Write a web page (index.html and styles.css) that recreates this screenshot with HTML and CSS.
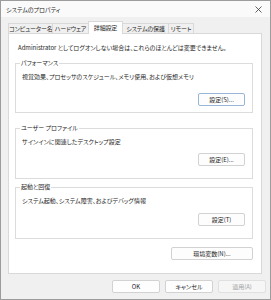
FILE: index.html
```html
<!DOCTYPE html>
<html lang="ja">
<head>
<meta charset="utf-8">
<title>システムのプロパティ</title>
<link rel="stylesheet" href="styles.css">
</head>
<body>
<div class="window">
  <div class="titlebar">
    <span class="title">システムのプロパティ</span>
    <svg class="close" width="7" height="7" viewBox="0 0 7 7"><path d="M0.5 0.5 L6.5 6.5 M6.5 0.5 L0.5 6.5" stroke="#3a3a3a" stroke-width="0.8" fill="none"/></svg>
  </div>
  <div class="tabs">
    <div class="tab t1">コンピューター名</div>
    <div class="tab t2">ハードウェア</div>
    <div class="tab t3 active">詳細設定</div>
    <div class="tab t4">システムの保護</div>
    <div class="tab t5">リモート</div>
  </div>
  <div class="panel">
    <div class="notice">Administrator としてログオンしない場合は、これらのほとんどは変更できません。</div>
    <div class="group g1">
      <div class="label">パフォーマンス</div>
      <div class="desc">視覚効果、プロセッサのスケジュール、メモリ使用、および仮想メモリ</div>
      <button class="btn focus">設定(S)...</button>
    </div>
    <div class="group g2">
      <div class="label">ユーザー プロファイル</div>
      <div class="desc">サインインに関連したデスクトップ設定</div>
      <button class="btn">設定(E)...</button>
    </div>
    <div class="group g3">
      <div class="label">起動と回復</div>
      <div class="desc">システム起動、システム障害、およびデバッグ情報</div>
      <button class="btn">設定(T)</button>
    </div>
    <button class="btn env">環境変数(N)...</button>
  </div>
  <div class="actions">
    <button class="btn act">OK</button>
    <button class="btn act">キャンセル</button>
    <button class="btn act disabled">適用(A)</button>
  </div>
</div>
</body>
</html>
```
FILE: styles.css
```css
* { box-sizing: border-box; }
html, body { margin: 0; padding: 0; }
body {
  width: 271px;
  height: 300px;
  font-family: "Noto Sans CJK JP", "Noto Sans", sans-serif;
  font-size: 6px;
  color: #262626;
  font-feature-settings: "palt";
  background: #f0f0f0;
}
.window {
  width: 271px;
  height: 300px;
  border: 1px solid #9c9c9c;
  background: #f0f0f0;
  display: flex;
  flex-direction: column;
}
.titlebar {
  height: 16px;
  background: #fafafa;
  display: flex;
  align-items: center;
  justify-content: space-between;
  padding: 0 8px 0 5px;
  flex: none;
}
.title { line-height: 9px; color: #2a2a2a; }
.close { display: block; }
.tabs {
  display: flex;
  align-items: flex-end;
  height: 12px;
  margin: 4px 0 0 7px;
  flex: none;
  position: relative;
  z-index: 1;
}
.tab {
  height: 10px;
  line-height: 9px;
  text-align: center;
  border: 1px solid #d9d9d9;
  border-bottom: none;
  margin-right: -1px;
  background: #f0f0f0;
  color: #2a2a2a;
  white-space: nowrap;
  letter-spacing: -0.15px;
}
.t1 { width: 45px; }
.t2 { width: 37px; }
.t3 { width: 35px; }
.t4 { width: 47px; }
.t5 { width: 26px; }
.tab.active {
  height: 13px;
  margin-bottom: -1px;
  background: #fff;
  line-height: 11px;
}
.panel {
  flex: none;
  height: 241px;
  margin: 0 8px 0 7px;
  background: #fff;
  border: 1px solid #d9d9d9;
  padding: 0 8px 0 6px;
  display: flex;
  flex-direction: column;
}
.notice {
  margin-top: 9px;
  padding-left: 3px;
  line-height: 9px;
  white-space: nowrap;
}
.group {
  border: 1px solid #dcdcdc;
  display: flex;
  flex-direction: column;
  padding: 0 7px 12px 6px;
}
.g1 { margin-top: 11px; height: 50px; padding-bottom: 6px; }
.g2 { margin-top: 15px; height: 51px; }
.g3 { margin-top: 8px; height: 52px; }
.label {
  margin: -5px 0 0 -2px;
  padding: 0 1px;
  line-height: 8px;
  background: #fff;
  align-self: flex-start;
  white-space: nowrap;
}
.desc {
  margin-top: 5px;
  line-height: 9px;
  white-space: nowrap;
}
.btn {
  font-family: inherit;
  font-size: 6px;
  font-feature-settings: "palt";
  color: #262626;
  background: #fdfdfd;
  border: 1px solid #d2d2d2;
  border-radius: 2px;
  height: 13px;
  padding: 0;
  line-height: 11px;
  text-align: center;
}
.group .btn {
  width: 47px;
  margin-top: auto;
  align-self: flex-end;
}
.btn.focus { border-color: #9ab6d6; }
.btn.env {
  width: 82px;
  margin-top: 8px;
  align-self: flex-end;
}
.actions {
  display: flex;
  justify-content: flex-end;
  gap: 5px;
  margin-top: 6px;
  padding-right: 4px;
}
.btn.act { width: 48px; }
.btn.disabled {
  color: #a3a3a3;
  background: #f6f6f6;
  border-color: #e0e0e0;
}
```
